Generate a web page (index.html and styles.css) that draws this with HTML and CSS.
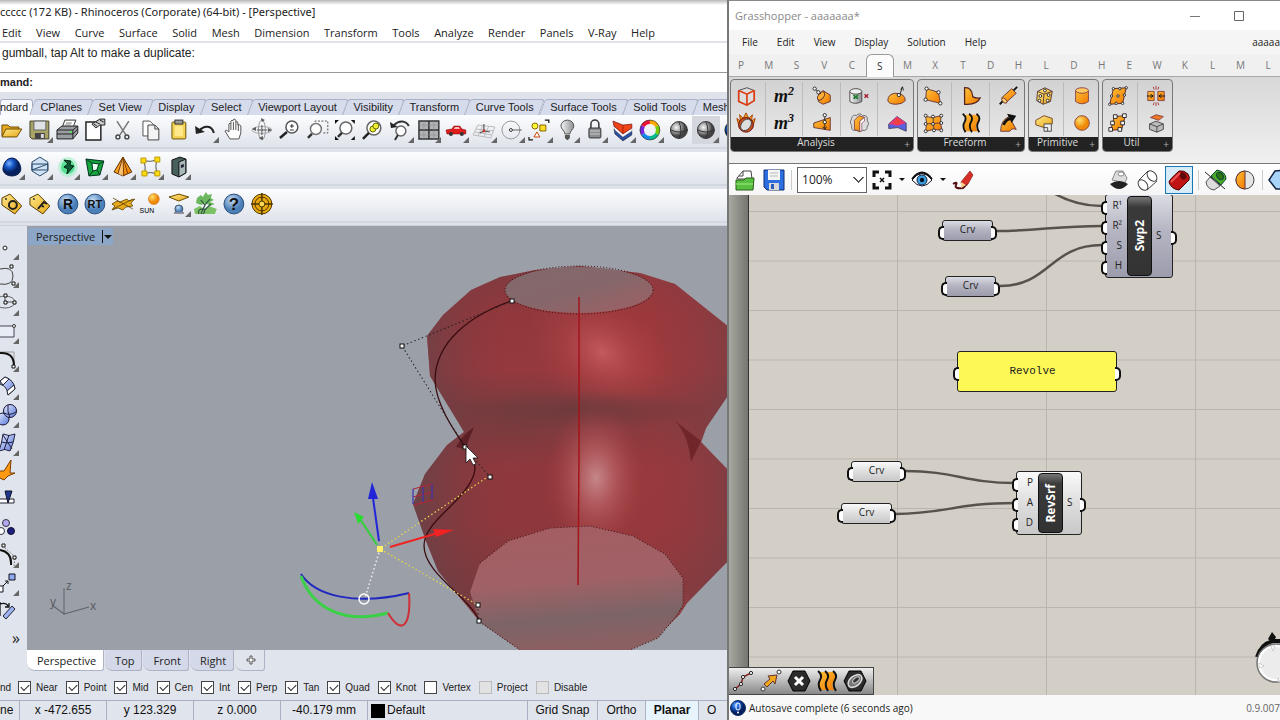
FILE: index.html
```
<!DOCTYPE html>
<html lang="en">
<head>
  <meta charset="UTF-8">
  <title>Rhinoceros + Grasshopper</title>
  <link rel="stylesheet" href="styles.css">
</head>
<body>

  <!-- shared gradients -->
  <svg class="defs" width="0" height="0">
    <defs>
      <linearGradient id="or" x1="0" y1="0" x2="1" y2="1"><stop offset="0" stop-color="#ffc23a"/><stop offset="1" stop-color="#f07800"/></linearGradient>
      <linearGradient id="ye" x1="0" y1="0" x2="1" y2="1"><stop offset="0" stop-color="#ffe88a"/><stop offset="1" stop-color="#e8a818"/></linearGradient>
      <radialGradient id="bl" cx=".35" cy=".3"><stop offset="0" stop-color="#7db4ff"/><stop offset=".5" stop-color="#1558c8"/><stop offset="1" stop-color="#06205e"/></radialGradient>
      <radialGradient id="lb" cx=".4" cy=".3"><stop offset="0" stop-color="#c4dcf4"/><stop offset="1" stop-color="#4a7fb8"/></radialGradient>
      <radialGradient id="gy" cx=".35" cy=".35"><stop offset="0" stop-color="#f4f4f4"/><stop offset=".6" stop-color="#9a9a9a"/><stop offset="1" stop-color="#444"/></radialGradient>
      <linearGradient id="cy" x1="0" y1="0" x2="1" y2="0"><stop offset="0" stop-color="#f4f4f4"/><stop offset="1" stop-color="#8c8f92"/></linearGradient>
      <radialGradient id="su" cx=".35" cy=".3"><stop offset="0" stop-color="#ffe070"/><stop offset="1" stop-color="#ee8a08"/></radialGradient>
      <linearGradient id="pu" x1="0" y1="0" x2="1" y2="1"><stop offset="0" stop-color="#e6ecff"/><stop offset="1" stop-color="#5a78d8"/></linearGradient>
    </defs>
  </svg>

  <section class="rhino">
    <header class="rhino-title">ccccc (172 KB) - Rhinoceros (Corporate) (64-bit) - [Perspective]</header>
    <nav class="rhino-menu">
      <button>Edit</button><button>View</button><button>Curve</button><button>Surface</button><button>Solid</button><button>Mesh</button><button>Dimension</button><button>Transform</button><button>Tools</button><button>Analyze</button><button>Render</button><button>Panels</button><button>V-Ray</button><button>Help</button>
    </nav>
    <div class="history">gumball, tap Alt to make a duplicate:</div>
    <div class="command"><label for="cmd">mand:</label><input id="cmd" type="text"></div>

    <nav class="tool-tabs">
      <button class="active">ndard</button><button>CPlanes</button><button>Set View</button><button>Display</button><button>Select</button><button>Viewport Layout</button><button>Visibility</button><button>Transform</button><button>Curve Tools</button><button>Surface Tools</button><button>Solid Tools</button><button>Mesh</button>
    </nav>

    <div class="toolbar">
      <button aria-label="Open"><svg viewBox="0 0 28 28"><path d="M4 20V9h6l2 2h9v3" fill="#e8a820" stroke="#6b4a00"/><path d="M4 21l4-8h16l-5 8z" fill="url(#ye)" stroke="#6b4a00"/></svg></button>
      <button class="more" aria-label="Save"><svg viewBox="0 0 28 28"><path d="M4 5h19v18H6l-2-2z" fill="#a8a468" stroke="#44432c"/><path d="M8 5h12v9H8z" fill="#dfe3e6" stroke="#666"/><path d="M9 17h10v6H9z" fill="#444"/><path d="M15 18h3v4h-3z" fill="#ddd"/></svg></button>
      <button aria-label="Print"><svg viewBox="0 0 28 28"><path d="M8 12l3-8h11l-3 8z" fill="#fff" stroke="#333"/><path d="M3 14l5-4h16v7l-5 6H3z" fill="#9a9ea2" stroke="#222"/><path d="M3 14h16l5-4M19 14v9M3 18h16l5-5" fill="none" stroke="#222"/><path d="M12 7h6M11 9h6" stroke="#777"/><circle cx="17" cy="16" r="1" fill="#4f4"/></svg></button>
      <button aria-label="Document properties"><svg viewBox="0 0 28 28"><path d="M5 6h15v18H5z" fill="#fff" stroke="#222" stroke-width="1.500"/><path d="M11 8l4 4 4-3 5 0V3l-5 0z" fill="#ccc" stroke="#222"/><path d="M13 8l3 2M15 6l4 2M19 4l4 2" stroke="#222"/></svg></button>
      <button aria-label="Cut"><svg viewBox="0 0 28 28"><path d="M8 5l9 14M20 5l-9 14" stroke="#777" stroke-width="1.500"/><circle cx="9" cy="21" r="2" fill="none" stroke="#444" stroke-width="1.400"/><circle cx="18" cy="21" r="2" fill="none" stroke="#444" stroke-width="1.400"/></svg></button>
      <button aria-label="Copy"><svg viewBox="0 0 28 28"><path d="M6 5h7l4 4v11H6z" fill="#fff" stroke="#555"/><path d="M11 9h7l4 4v11H11z" fill="#f4f4f4" stroke="#444"/><path d="M18 9v4h4" fill="none" stroke="#444"/></svg></button>
      <button aria-label="Paste"><svg viewBox="0 0 28 28"><rect x="7" y="6" width="14" height="17" rx="1" fill="#f4d458" stroke="#6b5200"/><rect x="10" y="4" width="8" height="4" fill="#999" stroke="#333"/><path d="M10 10h8v10h-8z" fill="#ffe98c"/></svg></button>
      <button class="more" aria-label="Undo"><svg viewBox="0 0 28 28"><path d="M7 15c5-6 13-6 15 2" fill="none" stroke="#222" stroke-width="2"/><path d="M3 10l1 8 9-2z" fill="#222"/></svg></button>
      <button aria-label="Pan"><svg viewBox="0 0 28 28"><path d="M10 23L5 15q1-2 4 1V8q1-2 2 0v-3q1-2 2 0V4q1-2 3 0v2q2-1 2 1v2q2-1 3 1v7l-2 6zM11 8v6M13.500 6v8M16 6v8M18.500 8v7" fill="#fff" stroke="#555"/></svg></button>
      <button aria-label="Rotate view"><svg viewBox="0 0 28 28"><ellipse cx="14" cy="14" rx="10" ry="3.500" fill="none" stroke="#aaa"/><ellipse cx="14" cy="14" rx="3.500" ry="10" fill="none" stroke="#999"/><path d="M14 9v10M9 14h10" stroke="#555"/><path d="M13 2l4 2-3 2zM20 12l4 2-4 2zM11 22l4-2v4zM4 13l4-2v4z" fill="#555"/></svg></button>
      <button aria-label="Zoom dynamic"><svg viewBox="0 0 28 28"><circle cx="16" cy="11" r="6" fill="#fff" stroke="#555" stroke-width="1.500"/><path d="M16 8v4M14 10h4M14 14h4" stroke="#333"/><path d="M11 16l-7 6" stroke="#222" stroke-width="2.500"/></svg></button>
      <button aria-label="Zoom window"><svg viewBox="0 0 28 28"><path d="M11 9V5h13v12h-5" fill="none" stroke="#555" stroke-dasharray="2 1.500"/><circle cx="12" cy="13" r="5.500" fill="#fff" stroke="#777" stroke-width="1.500"/><path d="M8 18l-4 4" stroke="#333" stroke-width="2.500"/></svg></button>
      <button aria-label="Zoom extents"><svg viewBox="0 0 28 28"><circle cx="15" cy="12" r="6" fill="#fff" stroke="#666" stroke-width="1.500"/><path d="M11 17l-4 4" stroke="#333" stroke-width="2.500"/><path d="M4 8V4h4zM24 8V4h-4zM4 20v4h4zM24 20v4h-4z" fill="#111"/></svg></button>
      <button aria-label="Zoom selected"><svg viewBox="0 0 28 28"><circle cx="15" cy="12" r="7" fill="#fff" stroke="#666" stroke-width="1.500"/><circle cx="14" cy="13" r="3" fill="#ee3" stroke="#660"/><circle cx="17" cy="10" r="3" fill="#ee3" stroke="#660"/><path d="M10 17l-6 6" stroke="#222" stroke-width="2.500"/></svg></button>
      <button class="more" aria-label="Undo view"><svg viewBox="0 0 28 28"><circle cx="14" cy="15" r="5" fill="#fff" stroke="#666" stroke-width="1.500"/><path d="M11 19l-3 5" stroke="#333" stroke-width="2"/><path d="M7 9c5-5 12-5 15 1" fill="none" stroke="#333" stroke-width="2"/><path d="M3 6l1 6 7-1z" fill="#222"/></svg></button>
      <button class="more" aria-label="4 viewports"><svg viewBox="0 0 28 28"><path d="M4 5h20v18H4zM14 5v18M4 14h20" fill="#b0b3b6" stroke="#333" stroke-width="1.500"/><path d="M9 5v18M19 5v18M4 9h20M4 19h20" stroke="#888" stroke-width=".5"/></svg></button>
      <button class="more" aria-label="Named view"><svg viewBox="0 0 28 28"><path d="M4 14l6-1 2-3h6l2 3 4 1v4H5z" fill="#e01c1c" stroke="#700" stroke-width=".5"/><path d="M12 13l1-2h4l1 2z" fill="#fbb"/><circle cx="9" cy="18" r="2" fill="#333"/><circle cx="20" cy="18" r="2" fill="#333"/></svg></button>
      <button class="more" aria-label="Set CPlane"><svg viewBox="0 0 28 28"><path d="M8 9l17 2-4 11-18-3zM6 13l18 2M5 16l17 3M13 9l-5 11M19 10l-5 11" fill="none" stroke="#bbb"/><path d="M14 15V8M14 15l6 1M14 15l-4 2" stroke="#555" stroke-width="1.200"/><circle cx="14" cy="15" r="1.500" fill="#c33"/></svg></button>
      <button class="more" aria-label="Set view"><svg viewBox="0 0 28 28"><circle cx="13" cy="14" r="9" fill="none" stroke="#999"/><path d="M14 14h10" stroke="#666"/><circle cx="13" cy="14" r="1.500" fill="#fff" stroke="#333"/></svg></button>
      <button class="more" aria-label="Object snap"><svg viewBox="0 0 28 28"><circle cx="9" cy="10" r="3" fill="#ff3" stroke="#886600"/><path d="M14 9h6v6h-6z" fill="#fd2" stroke="#860"/><path d="M11 16l3 5H8z" fill="#fff" stroke="#c40"/><path d="M19 4h4v3M3 21v3h4" fill="none" stroke="#111" stroke-width="1.200"/></svg></button>
      <button class="more" aria-label="Hide"><svg viewBox="0 0 28 28"><path d="M11 18c0-3-4-5-4-8a6.500 6 0 0113 0c0 3-4 5-4 8z" fill="url(#cy)" stroke="#555"/><path d="M11 19h5v3l-2 2h-1l-2-2z" fill="#555"/></svg></button>
      <button class="more" aria-label="Lock"><svg viewBox="0 0 28 28"><path d="M10 12V8a4 4 0 018 0v4" fill="none" stroke="#333" stroke-width="1.500"/><rect x="8" y="12" width="12" height="10" rx="1" fill="#8b8d90" stroke="#333"/><path d="M9 15h10M9 18h10" stroke="#ccc"/></svg></button>
      <button class="more" aria-label="Layers"><svg viewBox="0 0 28 28"><path d="M5 13l9 8 9-6v4l-9 6-8-7z" fill="#2a4fa0" stroke="#112" stroke-width=".5"/><path d="M5 10l9 8 9-6v3l-9 6-8-7z" fill="#fff" stroke="#889" stroke-width=".5"/><path d="M4 5l10 4 9-1v4l-9 6-9-8z" fill="#ee4418" stroke="#711" stroke-width=".7"/><path d="M14 9v8" stroke="#a20"/></svg></button>
      <button class="more" aria-label="Properties"><svg viewBox="0 0 28 28"><g fill="none" stroke-width="4"><path d="M13 6a8 8 0 017 4" stroke="#fa0"/><path d="M20 10a8 8 0 010 8" stroke="#7c0"/><path d="M20 18a8 8 0 01-7 4" stroke="#0b8"/><path d="M13 22a8 8 0 01-7-4" stroke="#18e"/><path d="M6 18a8 8 0 010-8" stroke="#72d"/><path d="M6 10a8 8 0 017-4" stroke="#e13"/></g><circle cx="13" cy="14" r="10" fill="none" stroke="#333" stroke-width=".7"/></svg></button>
      <button aria-label="Shade"><svg viewBox="0 0 28 28"><circle cx="14" cy="14" r="8.500" fill="url(#gy)" stroke="#333"/><path d="M6 14q8 4 17 0M14 6q4 8 0 17" fill="none" stroke="#333"/></svg></button>
      <button class="more pressed" aria-label="Render"><svg viewBox="0 0 28 28"><circle cx="14" cy="14" r="8.500" fill="url(#gy)" stroke="#333"/><path d="M6 14q8 4 17 0M14 6q4 8 0 17" fill="none" stroke="#333"/></svg></button>
      <button aria-label="Render preview"><svg viewBox="0 0 28 28"><circle cx="14" cy="14" r="9" fill="url(#bl)" stroke="#123"/></svg></button>
    </div>

    <div class="toolbar">
      <button class="more" aria-label="Sphere"><svg viewBox="0 0 28 28"><path d="M14 5c6 0 9 7 9 11s-4 7-9 7-9-3-9-7 3-11 9-11z" fill="url(#bl)" stroke="#041a4c"/></svg></button>
      <button class="more" aria-label="Wire box"><svg viewBox="0 0 28 28"><path d="M14 4l8 5v9l-8 5-8-5V9z" fill="#cfe3f5" stroke="#2b4a6a"/><path d="M6 11h16v6H6zM6 17l16-6" fill="none" stroke="#2b4a6a"/></svg></button>
      <button class="more" aria-label="Glow"><svg viewBox="0 0 28 28"><circle cx="14" cy="14" r="10" fill="#8ff0bc" opacity=".5"/><circle cx="14" cy="14" r="7" fill="#3ddc84" opacity=".8"/><path d="M10 7l7 1-1 4 4 1-7 8 1-5-4-2 4-3z" fill="#0d5a32" stroke="#021"/></svg></button>
      <button class="more" aria-label="Mesh plane"><svg viewBox="0 0 28 28"><path d="M5 6l18 2-4 14-11 1z" fill="#16a43c" stroke="#032"/><path d="M11 10l7 1-2 6-4 1z" fill="#e9fff0" stroke="#032"/><path d="M5 6l6 4M23 8l-5 3M8 23l4-5M19 22l-3-5" stroke="#032"/></svg></button>
      <button class="more" aria-label="Cone"><svg viewBox="0 0 28 28"><path d="M14 4l9 15-9 4-9-4z" fill="url(#or)" stroke="#5a2c00"/><path d="M14 4v19l-5-2z" fill="#fff" opacity=".4"/><path d="M14 4l1 19M14 4l-5 17M14 4l5 17" stroke="#7a3c00" fill="none"/></svg></button>
      <button class="more" aria-label="Control polygon"><svg viewBox="0 0 28 28"><path d="M6 7q8 3 15-1-4 7 0 15-8-3-14 0 3-7-1-14z" fill="none" stroke="#555"/><path d="M4 5h5v5H4zM18 4h5v5h-5zM18 18h5v5h-5zM5 18h5v5H5z" fill="#fd1" stroke="#b90"/></svg></button>
      <button class="more" aria-label="Book"><svg viewBox="0 0 28 28"><path d="M7 7l8-3 6 2v14l-7 4-7-3z" fill="#47605e" stroke="#111"/><path d="M14 9l7-3v14l-7 4z" fill="#a9b9b8" stroke="#111"/><path d="M16 12l3-1v3l-3 1z" fill="#223"/></svg></button>
    </div>

    <div class="toolbar last">
      <button aria-label="V-Ray options"><svg viewBox="0 0 28 28"><path d="M4 8l8-4 12 12-7 8L4 15z" fill="url(#ye)" stroke="#553c00"/><circle cx="15" cy="15" r="4" fill="none" stroke="#222" stroke-width="2"/><circle cx="8" cy="9" r="1" fill="#333"/></svg></button>
      <button aria-label="V-Ray frame buffer"><svg viewBox="0 0 28 28"><path d="M4 8l8-4 12 12-7 8L4 15z" fill="url(#ye)" stroke="#553c00"/><path d="M12 19l6-7 3 2M15 15l3 2" fill="none" stroke="#222" stroke-width="2"/><circle cx="8" cy="9" r="1" fill="#333"/></svg></button>
      <button aria-label="V-Ray render"><svg viewBox="0 0 28 28"><circle cx="14" cy="14" r="10" fill="url(#lb)" stroke="#2c4f7c"/><text x="14" y="19" class="ico-text">R</text></svg></button>
      <button aria-label="V-Ray RT"><svg viewBox="0 0 28 28"><circle cx="14" cy="14" r="10" fill="url(#lb)" stroke="#2c4f7c"/><text x="14" y="18" class="ico-text small">RT</text></svg></button>
      <button aria-label="Infinite plane"><svg viewBox="0 0 28 28"><path d="M3 14l5-3 3 1 7-3 2 2 6-2-4 4 2 3-7 1-3 3-5-2-6 2 3-4z" fill="#e8aa1c" stroke="#5c4000" stroke-width=".8"/><path d="M4 8l20 11M4 19L24 9" stroke="#5c4000" stroke-width=".8"/></svg></button>
      <button aria-label="Sun"><svg viewBox="0 0 28 28"><circle cx="17" cy="9" r="5.500" fill="url(#su)" stroke="#c60" stroke-width=".5"/><text x="10" y="23" class="sun-text">SUN</text></svg></button>
      <button class="more" aria-label="Lights"><svg viewBox="0 0 28 28"><path d="M4 7l10-3 10 3-10 4z" fill="url(#ye)" stroke="#6b4a00"/><circle cx="14" cy="19" r="4" fill="url(#lb)" stroke="#456"/><path d="M9 23h10" stroke="#889" stroke-width="2"/></svg></button>
      <button aria-label="Proxy tree"><svg viewBox="0 0 28 28"><path d="M5 8l4-3 2 2 3-5 2 3 4-1-1 4 3 2-4 2 5 2-5 2-4-3-5 2-5-2z" fill="#6cb85e"/><path d="M2 19l6-3 4 3 5-3 8 3-2 5H3z" fill="#7cc264"/><path d="M9 24l4-9-4-5M13 15l5-6M13 20l6-6M7 24q-2-5 5-5 2 2-1 5" fill="none" stroke="#354" stroke-width="1.200"/></svg></button>
      <button aria-label="Help"><svg viewBox="0 0 28 28"><circle cx="14" cy="14" r="10" fill="url(#lb)" stroke="#2c4f7c"/><text x="14" y="20" class="ico-text big">?</text></svg></button>
      <button aria-label="Target"><svg viewBox="0 0 28 28"><circle cx="14" cy="14" r="10" fill="#e8aa10" stroke="#4c3400"/><circle cx="14" cy="14" r="7" fill="none" stroke="#4c3400"/><circle cx="14" cy="14" r="3" fill="#ffda50" stroke="#4c3400"/><path d="M14 3v8M14 17v8M3 14h8M17 14h8" stroke="#4c3400" stroke-width="1.500"/></svg></button>
    </div>

    <main class="work">
      <aside class="side">
        <button class="more" aria-label="Point"><svg viewBox="0 0 20 28"><circle cx="5" cy="15" r="2" fill="#fff" stroke="#222"/></svg></button>
        <button class="more" aria-label="Curve"><svg viewBox="0 0 20 28"><path d="M0 8q13-3 13 7t-13 8" fill="none" stroke="#444"/><path d="M10 4h3v3h-3zM12 21h3v3h-3z" fill="#fff" stroke="#111"/></svg></button>
        <button class="more" aria-label="Ellipse"><svg viewBox="0 0 20 28"><ellipse cx="5" cy="13" rx="10" ry="6" fill="none" stroke="#666"/><path d="M5 13h9M5 13V7" stroke="#555"/><path d="M4 5h3v3H4zM4 12h3v3H4zM13 12h3v3h-3z" fill="#fff" stroke="#111"/></svg></button>
        <button class="more" aria-label="Rectangle"><svg viewBox="0 0 20 28"><path d="M-3 9h17v11H-3z" fill="#e8ecf4" stroke="#445"/><circle cx="14" cy="9" r="1.500" fill="#fff" stroke="#333"/></svg></button>
        <button class="more" aria-label="Fillet"><svg viewBox="0 0 20 28"><path d="M0 7h14v14" fill="none" stroke="#999"/><path d="M0 8q14-1 14 13" fill="none" stroke="#111" stroke-width="2"/><path d="M12 20h3v3h-3z" fill="#fff" stroke="#111"/></svg></button>
        <button class="more" aria-label="Surface"><svg viewBox="0 0 20 28"><path d="M0 8l5-4q9 3 10 12l-7 6q0-8-8-11z" fill="url(#pu)" stroke="#223"/><path d="M0 8l5-4 4 2-6 6zM8 22l7-6-1-4-7 6z" fill="#fff" stroke="#223"/></svg></button>
        <button class="more" aria-label="Solid"><svg viewBox="0 0 20 28"><circle cx="3" cy="18" r="6" fill="url(#pu)" stroke="#113"/><circle cx="10" cy="10" r="6.500" fill="url(#pu)" stroke="#113"/><path d="M4 12q6 3 12-1M8 4q-1 6 2 13" stroke="#224" fill="none"/></svg></button>
        <button class="more" aria-label="Mesh"><svg viewBox="0 0 20 28"><path d="M3 5q6 3 12 0-1 8-5 17-5-3-11 0Q2 14 3 5z" fill="url(#pu)" stroke="#224"/><path d="M1 13q6 2 12 0M9 6L4 21M3 6l9 14" fill="none" stroke="#224"/></svg></button>
        <button aria-label="Explode"><svg viewBox="0 0 20 28"><path d="M-2 14l6 0 7-11-1 13 5 0-7 3-4 4-6-3z" fill="#ff9a10" stroke="#7a3c00"/></svg></button>
        <button aria-label="Trim"><svg viewBox="0 0 20 28"><path d="M-2 14h16v4H-2z" fill="#fff" stroke="#223"/><path d="M5 6h7L8 18z" fill="#1d3a90" stroke="#112"/></svg></button>
        <button aria-label="Group"><svg viewBox="0 0 20 28"><circle cx="6" cy="10" r="3.500" fill="#b4a8f0" stroke="#334"/><circle cx="1" cy="18" r="3.500" fill="#fff" stroke="#334"/><circle cx="11" cy="18" r="3.500" fill="#20207c" stroke="#113"/></svg></button>
        <button class="more" aria-label="Edit points"><svg viewBox="0 0 20 28"><path d="M0 9q12 2 11 15" fill="none" stroke="#111" stroke-width="2"/><path d="M3 5l12 11-1 10" fill="none" stroke="#333" stroke-dasharray="1 2"/><path d="M2 3h3v3H2zM13 15h3v3h-3z" fill="#fff" stroke="#111"/></svg></button>
        <button class="more" aria-label="Scale"><svg viewBox="0 0 20 28"><path d="M9 5h6v6H9z" fill="#8fa8ee" stroke="#112"/><path d="M-3 17h6v6h-6z" fill="#fff" stroke="#112"/><path d="M3 17l5-5M5 12h3v3" fill="none" stroke="#111"/></svg></button>
        <button aria-label="Orient"><svg viewBox="0 0 20 28"><path d="M0 5v14M0 7q6-2 8 2M5 10l4 0 0-4" fill="none" stroke="#111" stroke-width="1.300"/><path d="M3 19L12 9l3 3L6 22z" fill="#9db2f2" stroke="#223"/></svg></button>
        <button class="chevrons">»</button>
      </aside>

      <div class="viewport">
        <button class="view-name">Perspective</button>
        <svg class="scene" viewBox="27 226 700 424" preserveAspectRatio="xMinYMin slice">
          <defs>
            <linearGradient id="body" x1="0" y1="267" x2="0" y2="650" gradientUnits="userSpaceOnUse">
              <stop offset="0" stop-color="#7c3c41"/><stop offset=".12" stop-color="#92383c"/><stop offset=".27" stop-color="#963a3e"/><stop offset=".37" stop-color="#763c3f"/><stop offset=".42" stop-color="#783c3f"/><stop offset=".52" stop-color="#8e393d"/><stop offset=".68" stop-color="#8e383c"/><stop offset=".85" stop-color="#743b3f"/><stop offset="1" stop-color="#a4585d"/>
            </linearGradient>
            <linearGradient id="edge" x1="413" y1="0" x2="727" y2="0" gradientUnits="userSpaceOnUse">
              <stop offset="0" stop-color="#63444a" stop-opacity=".85"/><stop offset=".3" stop-color="#8a353a" stop-opacity=".1"/><stop offset=".75" stop-color="#a8383c" stop-opacity=".4"/><stop offset="1" stop-color="#7d3f44" stop-opacity=".7"/>
            </linearGradient>
            <radialGradient id="shine"><stop offset="0" stop-color="#cc6266" stop-opacity=".8"/><stop offset=".5" stop-color="#b8484c" stop-opacity=".4"/><stop offset="1" stop-color="#a83c40" stop-opacity="0"/></radialGradient>
            <radialGradient id="shine2"><stop offset="0" stop-color="#c88c8e" stop-opacity=".95"/><stop offset=".4" stop-color="#bc6467" stop-opacity=".65"/><stop offset="1" stop-color="#a83c40" stop-opacity="0"/></radialGradient>
            <radialGradient id="fold"><stop offset="0" stop-color="#6b3b3d" stop-opacity=".8"/><stop offset="1" stop-color="#6b3b3d" stop-opacity="0"/></radialGradient>
            <linearGradient id="cap1" x1="0" y1="0" x2="1" y2="1"><stop offset="0" stop-color="#82696c"/><stop offset=".5" stop-color="#85676a"/><stop offset="1" stop-color="#a06065"/></linearGradient>
            <linearGradient id="cap2" x1="0" y1="0" x2=".15" y2="1"><stop offset="0" stop-color="#a35d62"/><stop offset=".5" stop-color="#a06166"/><stop offset=".8" stop-color="#7c6466"/><stop offset="1" stop-color="#8a6063"/></linearGradient>
            <path id="solid" d="M427 336l16-21 28-25 29-13 35-7 45-4 60 7 35 11 54 43v67l-23 34-5 14 28 29v89l-42 43-7 11-24 24-28 12H520l-20-14-20-14-42-51-12-30-13-37 12-30 22-29 17-13-6-10-28-46z"/>
          </defs>
          <use href="#solid" fill="url(#body)"/>
          <use href="#solid" fill="url(#edge)"/>
          <ellipse cx="602" cy="352" rx="80" ry="60" fill="url(#shine)" transform="rotate(35 602 352)"/>
          <ellipse cx="580" cy="410" rx="130" ry="20" fill="url(#fold)"/>
          <ellipse cx="596" cy="478" rx="50" ry="76" fill="url(#shine2)"/>
          <path d="M456 447q6-12 18-20l-9 22z" fill="#551a1e" opacity=".8"/>
          <path d="M675 421l26 20-10 21q-3-28-16-41z" fill="#6a2024" opacity=".8"/>
          <!-- end caps -->
          <ellipse cx="579" cy="290" rx="74" ry="23" fill="url(#cap1)"/>
          <path d="M470 592l10-29 28-22 42-13 40-2 43 10 32 18 18 24v27l-6 10-19 23-28 12H520l-40-28z" fill="url(#cap2)"/>
          <g fill="none" stroke="#401416" stroke-dasharray="1 2">
            <ellipse cx="579" cy="290" rx="74" ry="24"/>
            <path d="M480 563l28-22 42-13 40-2 43 10 32 18 18 24v27l-6 10-19 23-28 12M480 622l40 28"/>
          </g>
          <path d="M579 297v150l-1 138" stroke="#a3141c" stroke-width="1.500" fill="none"/>
          <!-- profile curve and its control points -->
          <path d="M511 301c-40 14-75 40-76 78 0 25 20 53 31 69 10 14 13 22 2 38-16 24-44 38-44 60 0 27 44 50 55 74" fill="none" stroke="#3a0c10" stroke-width="1.300"/>
          <path d="M512 301L402 346l63 101 24 29M478 605v15" fill="none" stroke="#222" stroke-dasharray="1.500 2.500"/>
          <path d="M489 476l-109 73 98 56" fill="none" stroke="#e6d44c" stroke-width="1.300" stroke-dasharray="1.500 2.500"/>
          <path d="M380 549l-15 49" fill="none" stroke="#eee" stroke-width="1.500" stroke-dasharray="1.500 2.500"/>
          <g fill="#fff" stroke="#111"><path d="M510 299h4v4h-4zM400 344h4v4h-4zM463 445h4v4h-4zM488 475h4v4h-4zM476 603h4v4h-4zM477 619h4v4h-4z"/></g>
          <!-- gumball -->
          <path d="M413 489l20-5M414 505l19-5M413 497l20-5" fill="none" stroke="#b02838" stroke-width="1.200"/>
          <path d="M413 489v15M423 487v15M432 484v15" stroke="#3a34b0" stroke-width="1.200"/>
          <g fill="none" stroke-width="2">
            <path d="M379 541l-6-43" stroke="#2224d8"/><path d="M377 545l-17-26" stroke="#30d038"/><path d="M390 547l48-14" stroke="#ee2424"/>
            <path d="M301 574c14 22 55 32 108 19" stroke="#2028c0"/><path d="M301 576c12 34 45 48 87 37" stroke="#3cd048" stroke-width="3"/><path d="M409 593c2 30-6 45-21 20" stroke="#d03038"/>
            <circle cx="364" cy="599" r="5" stroke="#fff" stroke-width="1.500"/>
          </g>
          <path d="M372 482l6 17h-10z" fill="#2224d8"/><path d="M354 512l10 5-6 7z" fill="#28dc30"/><path d="M454 530l-18 7-3-8z" fill="#f02222"/>
          <path d="M377 546h6v6h-6z" fill="#fff06a"/>
          <path d="M466 446v17l4-4 3 6 3-1-3-6h5z" fill="#fff" stroke="#111" stroke-width=".8"/>
          <!-- world axes -->
          <path d="M64 588v26l25-7M64 614l-12-9" fill="none" stroke="#60646a"/>
          <text x="66" y="590">z</text><text x="90" y="610">x</text><text x="50" y="606">y</text>
        </svg>
      </div>
    </main>

    <nav class="view-tabs">
      <button class="active">Perspective</button><button>Top</button><button>Front</button><button>Right</button>
      <button class="add" aria-label="New viewport"><svg width="10" height="10" viewBox="0 0 10 10"><path d="M4 1h2v3h3v2H6v3H4V6H1V4h3z" fill="#fff" stroke="#555"/></svg></button>
    </nav>

    <div class="osnap">
      <span>nd</span>
      <label><input type="checkbox" checked>Near</label>
      <label><input type="checkbox" checked>Point</label>
      <label><input type="checkbox" checked>Mid</label>
      <label><input type="checkbox" checked>Cen</label>
      <label><input type="checkbox" checked>Int</label>
      <label><input type="checkbox" checked>Perp</label>
      <label><input type="checkbox" checked>Tan</label>
      <label><input type="checkbox" checked>Quad</label>
      <label><input type="checkbox" checked>Knot</label>
      <label><input type="checkbox">Vertex</label>
      <label><input type="checkbox" disabled>Project</label>
      <label><input type="checkbox" disabled>Disable</label>
    </div>

    <footer class="rhino-status">
      <span class="plane">ne</span><span class="coord">x -472.655</span><span class="coord">y 123.329</span><span class="coord">z 0.000</span><span class="coord">-40.179 mm</span>
      <span class="layer"><i class="swatch"></i>Default</span>
      <button class="snap">Grid Snap</button><button class="ortho">Ortho</button><button class="planar">Planar</button><button>O</button>
    </footer>
  </section>

  <section class="gh">
    <header class="gh-title">
      <span>Grasshopper - aaaaaaa*</span>
      <button aria-label="Minimize"><svg width="12" height="12" viewBox="0 0 12 12"><path d="M1 6.500h10" stroke="#777"/></svg></button>
      <button aria-label="Maximize"><svg width="12" height="12" viewBox="0 0 12 12"><path d="M1.500 1.500h9v9h-9z" fill="none" stroke="#666"/></svg></button>
    </header>
    <nav class="gh-menu">
      <button>File</button><button>Edit</button><button>View</button><button>Display</button><button>Solution</button><button>Help</button>
      <span class="doc">aaaaa</span>
    </nav>
    <nav class="gh-tabs">
      <button>P</button><button>M</button><button>S</button><button>V</button><button>C</button><button class="active">S</button><button>M</button><button>X</button><button>T</button><button>D</button><button>H</button><button>L</button><button>D</button><button>H</button><button>E</button><button>W</button><button>K</button><button>L</button><button>M</button><button>L</button>
    </nav>

    <div class="ribbon">
      <div class="panel analysis">
        <div class="icons">
          <button aria-label="Deconstruct Brep"><svg viewBox="0 0 24 24"><path d="M4 6l9-3 8 3v11l-8 5-9-4z" fill="#ddd" stroke="#444"/><path d="M4 6l9 4 8-4M13 10v12M4 6v12l9 4 8-5V6" fill="none" stroke="#e03c10" stroke-width="1.800"/></svg></button>
          <button aria-label="Area"><i class="m">m<sup>2</sup></i></button>
          <button aria-label="Surface closest point"><svg viewBox="0 0 24 24"><path d="M8 12l5-6 8 5v7l-8 3-5-3z" fill="url(#or)" stroke="#633"/><ellipse cx="11" cy="12" rx="3" ry="5" transform="rotate(35 11 12)" fill="#ffb030" stroke="#633"/><path d="M4 4l7 6" stroke="#222"/><circle cx="4" cy="4" r="1.800" fill="#fff" stroke="#222"/><circle cx="8" cy="8" r="1.800" fill="#fff" stroke="#222"/></svg></button>
          <button aria-label="Point in Brep"><svg viewBox="0 0 24 24"><path d="M2 7v11q6 4 13 0V7" fill="url(#cy)" stroke="#444"/><ellipse cx="8.500" cy="7" rx="6.500" ry="3" fill="#eee" stroke="#444"/><path d="M6 11l5 4M11 11l-5 4" stroke="#1c7c30" stroke-width="1.800"/><path d="M18 10l4 4M22 10l-4 4" stroke="#a02030" stroke-width="1.500"/></svg></button>
          <button aria-label="Evaluate surface"><svg viewBox="0 0 24 24"><path d="M2 17q0-7 8-8 11 0 11 8-3 4-10 4-8 0-9-4z" fill="url(#or)" stroke="#633"/><path d="M15 11l3-9M16 5l2-3 1 4" stroke="#222" fill="none"/><circle cx="14" cy="11" r="1.800" fill="#fff" stroke="#222"/></svg></button>
          <button aria-label="Brep wireframe"><svg viewBox="0 0 24 24"><path d="M2 7l4 3-1-7 4 4 3-6 3 6 4-4-1 7 4-3-3 11H5z" fill="#f6a020" stroke="#a03c00"/><circle cx="12" cy="14" r="8" fill="#c85020" stroke="#611"/><ellipse cx="12" cy="14" rx="5" ry="7" transform="rotate(40 12 14)" fill="#ddd" stroke="#444"/></svg></button>
          <button aria-label="Volume"><i class="m">m<sup>3</sup></i></button>
          <button aria-label="Curvature"><svg viewBox="0 0 24 24"><path d="M3 12l18-6v14L3 17z" fill="url(#or)" stroke="#633"/><path d="M15 4v14M13 16l2 3 2-3" stroke="#222" fill="none"/><circle cx="15" cy="3.500" r="1.800" fill="#fff" stroke="#222"/><circle cx="15" cy="11" r="1.800" fill="#fff" stroke="#222"/></svg></button>
          <button aria-label="Shape in Brep"><svg viewBox="0 0 24 24"><path d="M4 7q1-5 5-3 4-4 7 0 6-1 5 5 3 4 0 7 0 5-5 4-4 3-7 0-6 1-5-5-3-4 0-8z" fill="#ddd" stroke="#666"/><path d="M7 9l5-5 6 2-5 4v11l-6-2z" fill="url(#or)" stroke="#844"/><path d="M13 10l5-4v4l-3 2v9l-2 0z" fill="#fff" stroke="#844" stroke-width=".7"/></svg></button>
          <button aria-label="Principal curvature"><svg viewBox="0 0 24 24"><path d="M3 13l9-8 10 7v9l-9-4-10 1z" fill="#5a62e0" stroke="#446"/><path d="M3 13l9-8 10 7-9 3z" fill="#e83878"/><path d="M8 12l4-6 5 5-4 3z" fill="#f04040"/></svg></button>
        </div>
        <div class="caption">Analysis<span>+</span></div>
      </div>
      <div class="panel freeform">
        <div class="icons">
          <button aria-label="4 point surface"><svg viewBox="0 0 24 24"><path d="M5 4l13 4 2 12L4 16z" fill="url(#or)" stroke="#633"/><g fill="#fff" stroke="#222"><circle cx="5" cy="4" r="1.800"/><circle cx="18" cy="8" r="1.800"/><circle cx="20" cy="20" r="1.800"/><circle cx="4" cy="16" r="1.800"/></g></svg></button>
          <button aria-label="Boundary surfaces"><svg viewBox="0 0 24 24"><path d="M5 3q8-1 9 10 4 2 8 1-3 8-17 7z" fill="url(#or)" stroke="#522" stroke-width="1.400"/></svg></button>
          <button aria-label="Pipe"><svg viewBox="0 0 24 24"><path d="M3 21l19-19" stroke="#111" stroke-width="2"/><path d="M5 14L16 4l5 5L10 19z" fill="url(#or)" stroke="#633"/><ellipse cx="8" cy="17" rx="2" ry="3.500" transform="rotate(-45 8 17)" fill="#ffcf70" stroke="#633"/></svg></button>
          <button aria-label="Surface from points"><svg viewBox="0 0 24 24"><path d="M4 5l8 1 9-2-1 8 2 8-9-1-9 2 1-9z" fill="url(#or)" stroke="#633"/><path d="M5 13l15-1M12 5l1 15" stroke="#633"/><g fill="#fff" stroke="#222"><circle cx="4" cy="4" r="1.600"/><circle cx="12" cy="5" r="1.600"/><circle cx="21" cy="4" r="1.600"/><circle cx="4" cy="13" r="1.600"/><circle cx="12" cy="13" r="1.600"/><circle cx="21" cy="12" r="1.600"/><circle cx="4" cy="21" r="1.600"/><circle cx="13" cy="20" r="1.600"/><circle cx="21" cy="20" r="1.600"/></g></svg></button>
          <button aria-label="Loft"><svg viewBox="0 0 24 24"><path d="M4 3q5 4 1 9t1 9h14q-5-4-1-9t-1-9z" fill="url(#or)"/><path d="M3 2q5 4 2 9t1 11M10 2q5 4 2 9t1 11M18 2q5 4 2 9t1 11" fill="none" stroke="#111" stroke-width="2"/></svg></button>
          <button aria-label="Sweep"><svg viewBox="0 0 24 24"><path d="M4 21q0-12 9-16l8 14q-5-2-7 2z" fill="url(#or)" stroke="#633"/><path d="M7 14q3-6 8-7" fill="none" stroke="#111" stroke-width="3"/><path d="M11 2l10 2-5 8z" fill="#111"/></svg></button>
        </div>
        <div class="caption">Freeform<span>+</span></div>
      </div>
      <div class="panel">
        <div class="icons">
          <button aria-label="Bounding box"><svg viewBox="0 0 24 24"><path d="M5 7l8-4 8 4-2 11-8 3-7-4z" fill="url(#ye)" stroke="#533"/><path d="M5 7l7 3 9-3M12 10l-1 11" fill="none" stroke="#533"/><g fill="#fff" stroke="#222"><circle cx="13" cy="6" r="1.500"/><circle cx="8" cy="12" r="1.500"/><circle cx="17" cy="11" r="1.500"/><circle cx="7" cy="17" r="1.500"/><circle cx="16" cy="17" r="1.500"/></g></svg></button>
          <button aria-label="Cylinder"><svg viewBox="0 0 24 24"><path d="M5 6v12q7 5 14 0V6" fill="url(#or)" stroke="#844"/><ellipse cx="12" cy="6" rx="7" ry="3" fill="#ffc860" stroke="#844"/></svg></button>
          <button aria-label="Box"><svg viewBox="0 0 24 24"><path d="M3 9l9-5 9 3v6l-9 4-9-3z" fill="url(#ye)" stroke="#742"/><path d="M12 13h8v8h-8z" fill="#eee" stroke="#444"/><path d="M12 17h4v4" fill="none" stroke="#444"/></svg></button>
          <button aria-label="Sphere"><svg viewBox="0 0 24 24"><circle cx="12" cy="12" r="8" fill="url(#su)" stroke="#844"/></svg></button>
        </div>
        <div class="caption">Primitive<span>+</span></div>
      </div>
      <div class="panel">
        <div class="icons">
          <button aria-label="Divide surface"><svg viewBox="0 0 24 24"><path d="M7 4l14-1-4 17-14 1z" fill="url(#or)" stroke="#522"/><g fill="#fff" stroke="#222"><circle cx="7" cy="4" r="1.300"/><circle cx="14" cy="4" r="1.300"/><circle cx="21" cy="3" r="1.300"/><circle cx="5" cy="12" r="1.300"/><circle cx="12" cy="12" r="1.300"/><circle cx="19" cy="11" r="1.300"/><circle cx="3" cy="21" r="1.300"/><circle cx="10" cy="20" r="1.300"/><circle cx="17" cy="20" r="1.300"/></g></svg></button>
          <button aria-label="Brep join"><svg viewBox="0 0 24 24"><path d="M3 7h7v10H3zM14 7h7v10h-7z" fill="url(#or)" stroke="#844"/><path d="M2 12h6M6 10l3 2-3 2M22 12h-6M18 10l-3 2 3 2" stroke="#111" fill="none"/><path d="M12 1v4M12 19v4M9 2l1 3M15 2l-1 3M9 22l1-3M15 22l-1-3" stroke="#a33"/></svg></button>
          <button aria-label="Surface frames"><svg viewBox="0 0 24 24"><path d="M8 5l12-1-4 15-12 1z" fill="url(#or)" stroke="#522"/><g fill="#fff" stroke="#222"><path d="M7 3h4v4H7zM17 2h4v4h-4zM4 10h4v4H4zM15 10h4v4h-4zM2 17h4v4H2zM12 17h4v4h-4z"/></g></svg></button>
          <button aria-label="Cap holes"><svg viewBox="0 0 24 24"><path d="M5 13l7-3 8 3v6l-7 3-8-3z" fill="#bbb" stroke="#444"/><path d="M5 13l8 3 7-3M13 16v6" fill="none" stroke="#444"/><path d="M6 6l6-3 8 2-5 4z" fill="#f07820" stroke="#844"/></svg></button>
        </div>
        <div class="caption">Util<span>+</span></div>
      </div>
    </div>

    <div class="gh-bar">
      <button aria-label="Open file"><svg width="24" height="24" viewBox="0 0 24 24"><path d="M4 10l6-7h8l1 8H4z" fill="#fff" stroke="#444"/><path d="M10 3v5H6" fill="none" stroke="#444"/><path d="M3 22V12h8l2-2h8l-1 12z" fill="#58c040" stroke="#285c18"/><path d="M3 16h17" stroke="#a4ec84"/></svg></button>
      <button aria-label="Save file"><svg width="24" height="24" viewBox="0 0 24 24"><path d="M2 2h20v20H5l-3-3z" fill="#2c6ee0" stroke="#0d2c70"/><path d="M6 2h12v10H6z" fill="#f4f4f4"/><path d="M8 5h8M8 8h8" stroke="#bbb"/><path d="M7 15h10v7H7z" fill="#d8d8d8"/><path d="M9 16h3v5H9z" fill="#2c5ebc"/></svg></button>
      <i class="sep"></i>
      <select aria-label="Zoom"><option>100%</option></select>
      <button aria-label="Zoom extents"><svg width="20" height="20" viewBox="0 0 20 20"><path d="M2 7V2h5M13 2h5v5M18 13v5h-5M7 18H2v-5" fill="none" stroke="#111" stroke-width="3"/><path d="M8 8l4 4M12 8l-4 4" stroke="#111" stroke-width="1.500"/></svg></button>
      <i class="drop"></i>
      <button aria-label="Preview"><svg width="22" height="20" viewBox="0 0 22 20"><path d="M1 10q10-13 20 0-10 12-20 0z" fill="#fff" stroke="#112"/><circle cx="11" cy="10" r="5" fill="#3aa0e0" stroke="#124"/><circle cx="11" cy="10" r="2.200" fill="#012"/><path d="M1 9q10-13 20 0" fill="none" stroke="#111" stroke-width="1.800"/></svg></button>
      <i class="drop"></i>
      <button aria-label="Sketch"><svg width="22" height="22" viewBox="0 0 22 22"><path d="M1 15q5-3 3 1t7 3l4-4" fill="none" stroke="#511" stroke-width="2"/><path d="M9 13l9-11 3 4-5 9-6 3z" fill="#d83028" stroke="#611" stroke-width=".6"/><path d="M9 13l5 3-5 3z" fill="#f8d090"/></svg></button>
      <span class="grow"></span>
      <button aria-label="No preview"><svg width="24" height="24" viewBox="0 0 24 24"><path d="M5 12l4-9h7l4 7-2 5z" fill="#ddd" stroke="#888"/><ellipse cx="14" cy="6" rx="3" ry="2" fill="#fff" stroke="#888"/><path d="M3 16q9-6 18 0-9 10-18 0z" fill="#222"/></svg></button>
      <button aria-label="Wireframe preview"><svg width="24" height="24" viewBox="0 0 24 24"><path d="M2 15L14 2l8 7-11 13z" fill="#fff"/><ellipse cx="7" cy="17" rx="4" ry="6" transform="rotate(-40 7 17)" fill="none" stroke="#444"/><ellipse cx="16" cy="8" rx="4" ry="6" transform="rotate(-40 16 8)" fill="none" stroke="#444"/><path d="M3 12l9-9M11 22l10-9" stroke="#444"/></svg></button>
      <button class="on" aria-label="Shaded preview"><svg width="24" height="24" viewBox="0 0 24 24"><path d="M2 14q0-2 10-11 5-1 9 3 2 3 1 6L12 22q-8-1-10-8z" fill="#c01414" stroke="#400"/><ellipse cx="16" cy="8" rx="3" ry="4" transform="rotate(-40 16 8)" fill="#5c0808"/><path d="M4 14l9-9" stroke="#e55" stroke-width="2"/></svg></button>
      <i class="sep"></i>
      <button aria-label="Selected preview"><svg width="24" height="24" viewBox="0 0 24 24"><path d="M2 14q1 7 8 8l6-4-10-9z" fill="#ddd" stroke="#555"/><path d="M7 8l6-6q9 2 9 9l-5 6z" fill="#48ac28" stroke="#143"/><ellipse cx="16" cy="8" rx="3" ry="4" transform="rotate(-40 16 8)" fill="#2c7414" stroke="#143"/><path d="M1 4l20 17" stroke="#222"/></svg></button>
      <button aria-label="Preview quality"><svg width="24" height="24" viewBox="0 0 24 24"><circle cx="12" cy="12" r="9" fill="#e4e4e4" stroke="#444"/><path d="M12 3a9 9 0 000 18z" fill="url(#or)" stroke="#633"/></svg></button>
      <i class="sep"></i>
      <button aria-label="Mesh settings"><svg width="24" height="24" viewBox="0 0 24 24"><path d="M7 3l10-1 6 10-6 9H8L1 12z" fill="#a9d4fa" stroke="#124" stroke-width="1.500"/></svg></button>
    </div>

    <div class="canvas">
      <svg class="wires">
        <defs><pattern id="grid" x="897" y="211" width="149" height="49.500" patternUnits="userSpaceOnUse"><path d="M0 .5h149M.5 0v50" stroke="#bab6ae" fill="none"/></pattern></defs>
        <g transform="translate(-729 -195)">
          <rect x="749" y="195" width="4000" height="4000" fill="url(#grid)"/>
          <g fill="none" stroke="#57534c" stroke-width="2.500">
            <path d="M1050 191c16 10 34 15 52 15M997 231c40 0 60-5 105-5M1000 286c50 0 50-41 102-41M905 471c50 0 60 12 110 12M895 514c50 0 60-11 120-11"/>
          </g>
        </g>
      </svg>

      <div class="node param crv1">Crv</div>
      <div class="node param crv2">Crv</div>
      <div class="node param light crv3">Crv</div>
      <div class="node param light crv4">Crv</div>
      <div class="node note">Revolve</div>
      <div class="node comp swp">
        <ul><li>R¹</li><li>R²</li><li>S</li><li>H</li></ul><b><span>Swp2</span></b><em>S</em>
      </div>
      <div class="node comp light rev">
        <ul><li>P</li><li>A</li><li>D</li></ul><b><span>RevSrf</span></b><em>S</em>
      </div>

      <svg class="compass" width="28" height="56" viewBox="1252 630 28 56">
        <path d="M1257 657q4-13 16-16h8" fill="none" stroke="#111" stroke-width="4"/>
        <circle cx="1276" cy="663" r="19" fill="#ececec" stroke="#777" stroke-width="1.500"/>
        <circle cx="1276" cy="663" r="17" fill="none" stroke="#fff" stroke-width="2"/>
        <path d="M1272 632l4 5-3 6-5-4z" fill="#111"/><path d="M1271 646l4 0-2 5zM1259 663l5 3-5 2zM1278 678l2 4-2 0z" fill="#fff" stroke="#aaa" stroke-width=".5"/>
      </svg>

      <div class="recent">
        <button aria-label="Polyline"><svg viewBox="0 0 24 24"><path d="M4 20l6-5 2-7 8-4" fill="none" stroke="#822" stroke-width="1.500"/><g fill="#fff" stroke="#222"><circle cx="4" cy="20" r="1.600"/><circle cx="10" cy="15" r="1.600"/><circle cx="12" cy="8" r="1.600"/><circle cx="20" cy="4" r="1.600"/></g></svg></button>
        <button aria-label="Vector"><svg viewBox="0 0 24 24"><path d="M5 15l6-5-2-3 9-1-2 9-2-3-6 6z" fill="#f0a818" stroke="#633"/><circle cx="4" cy="20" r="2" fill="#fff" stroke="#333"/><circle cx="20" cy="3" r="2" fill="#fff" stroke="#333"/></svg></button>
        <button aria-label="Null"><svg viewBox="0 0 24 24"><path d="M6 2h12l5 10-5 10H6L1 12z" fill="#2b2b2b" stroke="#000"/><path d="M8 8l8 8M16 8l-8 8" stroke="#fff" stroke-width="3"/></svg></button>
        <button aria-label="Loft"><svg viewBox="0 0 24 24"><path d="M4 3q5 4 1 9t1 9h14q-5-4-1-9t-1-9z" fill="url(#or)"/><path d="M3 2q5 4 2 9t1 11M10 2q5 4 2 9t1 11M18 2q5 4 2 9t1 11" fill="none" stroke="#111" stroke-width="2"/></svg></button>
        <button aria-label="Pipe"><svg viewBox="0 0 24 24"><path d="M6 2h12l5 10-5 10H6L1 12z" fill="#2b2b2b" stroke="#000"/><ellipse cx="12" cy="12" rx="8" ry="5" transform="rotate(-40 12 12)" fill="#777" stroke="#ddd" stroke-width="1.500"/><ellipse cx="13" cy="11" rx="4" ry="2" transform="rotate(-40 13 11)" fill="#333" stroke="#ccc"/></svg></button>
      </div>
    </div>

    <footer class="gh-status">
      <svg width="16" height="16" viewBox="0 0 16 16"><circle cx="8" cy="8" r="7.500" fill="url(#bl)" stroke="#0a2a60"/><rect x="6" y="3" width="4" height="7" rx="2" fill="none" stroke="#fff"/><circle cx="8" cy="12.500" r="1" fill="#fff"/></svg>
      <span>Autosave complete (6 seconds ago)</span>
      <span class="version">0.9.007</span>
    </footer>
  </section>

</body>
</html>
```
FILE: styles.css
```
* {
  box-sizing: border-box;
}

body {
  margin: 0;
  height: 100vh;
  display: flex;
  overflow: hidden;
  background: #e0e4ec;
  font-family: 'Open Sans', 'Noto Sans', sans-serif;
  font-size: 11px;
  color: #222;
}

button {
  border: none;
  background: none;
  padding: 0;
  margin: 0;
  font: inherit;
  color: inherit;
  white-space: nowrap;
}

svg {
  display: block;
}

.defs {
  position: absolute;
}

/* ---------- Rhino window ---------- */
.rhino {
  flex: 0 0 56.8%;
  min-width: 0;
  display: flex;
  flex-direction: column;
  overflow: hidden;
  background: #e0e4ec;
}

.rhino-title {
  height: 23px;
  line-height: 23px;
  background: linear-gradient(#b8b8b8, #fff 5px);
  font-family: 'Noto Sans', sans-serif;
  white-space: nowrap;
}

.rhino-menu {
  height: 18px;
  display: flex;
  align-items: center;
  justify-content: space-between;
  padding: 0 72px 0 2px;
  background: #fff;
}

.history {
  height: 32px;
  padding: 2px 0 0 2px;
  line-height: 16px;
  background: #fff;
  border-top: 2px solid #dfe2ea;
  border-bottom: 1px solid #999;
  font-family: 'Liberation Sans', sans-serif;
  font-size: 12px;
}

.command {
  display: flex;
  height: 19px;
  background: #fff;
  font: bold 11px/18px 'Liberation Sans', sans-serif;
}

.command input {
  flex: 1;
  border: none;
  outline: none;
}

.tool-tabs {
  height: 23px;
  margin-right: -11px;
  padding-top: 7px;
  display: flex;
  background: #dfe2ea;
  border-bottom: 1px solid #bcc3d2;
  font-family: 'Liberation Sans', sans-serif;
  font-size: 11px;
}

.tool-tabs button {
  position: relative;
  flex: 1 0 auto;
  z-index: 1;
  padding: 0 8px;
  height: 16px;
  line-height: 16px;
}

.tool-tabs button::before {
  content: "";
  position: absolute;
  z-index: -1;
  inset: 0 -1px 0 0;
  background: #d6dcec;
  border: 1px solid #a9b1c6;
  border-bottom: none;
  border-radius: 3px 3px 0 0;
  transform: skewX(-20deg);
}

.tool-tabs .active {
  flex-grow: 0;
  padding: 0 4px 0 0;
}

.tool-tabs .active::before {
  background: #f6f8fc;
  transform: none;
}

.toolbar {
  height: 37px;
  flex: none;
  margin-right: -21px;
  margin-left: -2px;
  padding-top: 1px;
  display: grid;
  grid-template-columns: repeat(27, 1fr);
  align-items: start;
  background: linear-gradient(#fcfdfe, #dfe3eb 32px, #c6cad4 33px, #dfe2ea 34px);
}

.toolbar.last {
  border-bottom: 1px solid #cdd1da;
}

.toolbar svg {
  width: 100%;
  height: 28px;
}

.more {
  position: relative;
}

.more::after {
  content: "";
  position: absolute;
  right: 1px;
  bottom: 1px;
  border: 3px solid;
  border-color: transparent #666 #666 transparent;
}

.pressed {
  background: #d4d7dd;
}

.ico-text {
  font: bold 14px 'Liberation Sans', sans-serif;
  text-anchor: middle;
  fill: #111;
}

.ico-text.small {
  font-size: 11px;
}

.ico-text.big {
  font-size: 17px;
}

.sun-text {
  font: 7px 'Liberation Sans', sans-serif;
  text-anchor: middle;
}

.work {
  flex: 1;
  min-height: 0;
  display: flex;
}

.side {
  flex: 0 0 27px;
  display: flex;
  flex-direction: column;
  padding-top: 7px;
  background: #e0e4ec;
}

.side button {
  flex: 1;
  width: 20px;
}

.side svg {
  width: 20px;
  height: 28px;
}

.chevrons {
  font-size: 16px;
  line-height: 20px;
  text-align: right;
}

.viewport {
  position: relative;
  flex: 1;
  min-width: 0;
  background: #9b9fa8;
}

.scene {
  width: 100%;
  height: 100%;
}

.scene text {
  font: 12px 'Open Sans', sans-serif;
  fill: #585c62;
}

.view-name {
  position: absolute;
  left: 1px;
  top: 2px;
  height: 17px;
  padding: 0 18px 0 8px;
  background: #8ba6c6;
  line-height: 17px;
}

.view-name::before {
  content: "";
  position: absolute;
  right: 10px;
  top: 2px;
  height: 13px;
  border-left: 1px solid #111;
}

.view-name::after {
  content: "";
  position: absolute;
  right: 1px;
  top: 7px;
  border: 4px solid transparent;
  border-top-color: #111;
}

.view-tabs {
  height: 21px;
  margin-left: 27px;
  display: flex;
  gap: 1px;
}

.view-tabs button {
  height: 21px;
  padding: 0 7px 0 10px;
  background: #d3d9e8;
  border-right: 1px solid #adb3c4;
  border-bottom: 1px solid #adb3c4;
  border-radius: 0 0 3px 8px;
}

.view-tabs .active {
  background: #fff;
}

.view-tabs .add {
  background: none;
  padding: 0 8px 0 11px;
}

.osnap {
  height: 29px;
  padding-top: 4px;
  display: flex;
  align-items: center;
  gap: 8px;
  font: 10px 'Liberation Sans', sans-serif;
}

.osnap span {
  width: 10px;
}

.osnap label {
  display: flex;
  align-items: center;
  gap: 5px;
}

.osnap input {
  appearance: none;
  width: 13px;
  height: 13px;
  margin: 0;
  border: 1px solid #444;
  background: #fff;
  position: relative;
}

.osnap input:checked::after {
  content: "";
  position: absolute;
  left: 2px;
  top: 2px;
  width: 7px;
  height: 4px;
  border: solid #222;
  border-width: 0 0 1px 1px;
  transform: rotate(-45deg);
}

.osnap input:disabled {
  border-color: #bbb;
  background: #e2e2e2;
}

.rhino-status {
  height: 20px;
  flex: none;
  display: flex;
  border-top: 1px solid #a9b0c4;
  font: 12px/19px 'Liberation Sans', sans-serif;
  color: #111;
}

.rhino-status > * {
  flex: none;
  border-right: 1px solid #a9b0c4;
  text-align: center;
}

.plane {
  width: 20px;
  padding-right: 8px;
}

.coord {
  width: 87px;
}

.layer {
  width: 160px;
  display: flex;
  align-items: center;
  gap: 2px;
  padding-left: 3px;
}

.swatch {
  width: 14px;
  height: 14px;
  background: #000;
}

.snap {
  width: 70px;
}

.ortho {
  width: 48px;
}

.planar {
  width: 53px;
  font-weight: bold;
  background: #e8f4fc;
}

.rhino-status button:last-child {
  padding-left: 8px;
  border: none;
}

/* ---------- Grasshopper window ---------- */
.gh {
  flex: 1;
  min-width: 0;
  display: flex;
  flex-direction: column;
  overflow: hidden;
  background: #f0f0f0;
  border-left: 2px solid #777;
  border-top: 1px solid #888;
  font-size: 10px;
}

.gh-title {
  height: 29px;
  flex: none;
  display: flex;
  align-items: center;
  gap: 32px;
  padding: 0 35px 0 6px;
  background: #fff;
  font-size: 11px;
  color: #888;
}

.gh-title span {
  flex: 1;
}

.gh-menu {
  height: 24px;
  flex: none;
  display: flex;
  align-items: center;
  gap: 19px;
  padding-left: 13px;
  background: #f5f5f5;
}

.doc {
  margin-left: auto;
}

.gh-tabs {
  height: 23px;
  flex: none;
  margin: 0 -2px;
  display: grid;
  grid-template-columns: repeat(20, 1fr);
  border-bottom: 1px solid #a8a8a8;
  color: #777;
}

.gh-tabs .active {
  margin-bottom: -1px;
  background: #fcfcfc;
  border: 1px solid #999;
  border-bottom: none;
  border-radius: 6px 6px 0 0;
  color: #333;
}

.ribbon {
  flex: none;
  height: 87px;
  display: flex;
  align-items: flex-start;
  gap: 3px;
  padding: 2px 1px;
  background: linear-gradient(#d8d8d8, #f0f0f0);
  border-bottom: 1px solid #777;
}

.panel {
  width: 71px;
  border: 1px solid #777;
  border-radius: 4px;
  overflow: hidden;
  background: linear-gradient(#d2d2d2, #ececec);
}

.analysis {
  width: 184px;
}

.freeform {
  width: 108px;
}

.icons {
  height: 57px;
  margin: 0 -2px 0 -4px;
  padding-top: 2px;
  display: grid;
  grid-template-columns: repeat(2, 1fr);
  grid-template-rows: 27px 27px;
}

.analysis .icons {
  grid-template-columns: repeat(5, 1fr);
}

.freeform .icons {
  grid-template-columns: repeat(3, 1fr);
}

.icons button {
  display: flex;
  align-items: center;
  justify-content: center;
  border-left: 1px solid #bcbcbc;
}

.icons svg {
  width: 22px;
  height: 22px;
}

.m {
  font: italic bold 18px/20px 'Liberation Serif', serif;
  color: #111;
}

.m sup {
  font-size: 12px;
  line-height: 0;
}

.caption {
  position: relative;
  height: 14px;
  padding-right: 12px;
  line-height: 11px;
  text-align: center;
  background: #222;
  color: #ddd;
}

.caption span {
  position: absolute;
  right: 3px;
  top: 2px;
  color: #aaa;
}

.gh-bar {
  flex: none;
  height: 31px;
  display: flex;
  align-items: center;
  gap: 5px;
  padding-left: 4px;
  margin-right: -12px;
  background: linear-gradient(#fff, #f6f6f6);
}

.gh-bar > * {
  flex: none;
}

.gh-bar .grow {
  flex: 1;
}

.gh-bar .on {
  padding: 1px;
  border: 1px solid #1778b8;
  background: #d8ecf8;
}

.sep {
  width: 1px;
  height: 20px;
  background: #ccc;
}

.drop {
  margin: 3px 1px 0 2px;
  border: 3px solid transparent;
  border-top-color: #111;
}

.gh-bar select {
  appearance: none;
  width: 70px;
  height: 26px;
  padding: 0 4px;
  border: 1px solid #666;
  border-radius: 0;
  color: #222;
  font: 12px 'Open Sans', sans-serif;
  background:
    linear-gradient(45deg, transparent 50%, #555 50%, #555 60%, transparent 60%) 57px 9px / 6px 6px no-repeat,
    linear-gradient(-45deg, transparent 50%, #555 50%, #555 60%, transparent 60%) 62px 9px / 6px 6px no-repeat,
    #fff;
  background:
    linear-gradient(45deg, transparent 45%, #555 45%, #555 60%, transparent 60%) 55px 9px / 6px 6px no-repeat,
    linear-gradient(-45deg, transparent 45%, #555 45%, #555 60%, transparent 60%) 60px 9px / 6px 6px no-repeat,
    #fff;
}

.canvas {
  position: relative;
  flex: 1;
  min-height: 0;
  overflow: hidden;
  background: linear-gradient(90deg, #a7a9a0, #74766f 19px, #333 19px, #333 20px, #d3cec6 20px);
}

.wires {
  position: absolute;
  width: 100%;
  height: 100%;
}

/* nodes sit on the free canvas */
.node {
  position: absolute;
  border: 1px solid #222;
  border-radius: 3px;
  background: linear-gradient(#dcdce4, #b4b4c2 45%, #9c9cac);
  color: #222;
}

.node.light {
  background: linear-gradient(#fafafa, #dedede 50%, #c8c8c8);
}

.param,
.note {
  text-align: center;
}

.param {
  width: 51px;
  height: 21px;
  line-height: 17px;
}

.param::before,
.param::after,
.note::before,
.note::after,
.comp em::after,
.comp li::before {
  content: "";
  position: absolute;
  width: 4px;
  height: 10px;
  top: calc(50% - 5px);
  border: 2px solid #111;
  background: #fff;
}

.param::before,
.note::before,
.comp li::before {
  left: -5px;
  border-right: none;
  border-radius: 5px 0 0 5px;
}

.param::after,
.note::after,
.comp em::after {
  right: -5px;
  border-left: none;
  border-radius: 0 5px 5px 0;
}

.crv1 { left: 213px; top: 25px; }
.crv2 { left: 216px; top: 81px; }
.crv3 { left: 122px; top: 266px; }
.crv4 { left: 112px; top: 308px; }

.note {
  left: 228px;
  top: 156px;
  width: 160px;
  height: 41px;
  padding-right: 9px;
  background: #fdf855;
  font: 11px/39px 'Liberation Mono', monospace;
}

.comp {
  display: flex;
  padding: 1px;
}

.comp ul {
  flex: none;
  width: 20px;
  margin: 0;
  padding: 0;
  list-style: none;
  text-align: right;
}

.comp li {
  position: relative;
  height: 20px;
  padding-right: 5px;
  line-height: 18px;
}

.comp li::before {
  left: -6px;
}

.comp b {
  flex: none;
  width: 25px;
  display: flex;
  align-items: center;
  justify-content: center;
  border: 1px solid #111;
  border-radius: 4px;
  background: linear-gradient(#777, #3a3a3a 10px, #333);
  color: #fff;
  font-size: 12px;
}

.comp b span {
  writing-mode: vertical-rl;
  transform: rotate(180deg);
}

.comp em {
  flex: 1;
  align-self: center;
  padding: 0 0 2px 4px;
  font-style: normal;
}

.swp {
  left: 376px;
  top: -1px;
  width: 68px;
  height: 84px;
}

.rev {
  left: 287px;
  top: 276px;
  width: 66px;
  height: 64px;
}

.compass {
  position: absolute;
  right: 0;
  bottom: 9px;
}

.recent {
  position: absolute;
  left: 0;
  bottom: 0;
  display: flex;
  gap: 4px;
  padding: 1px 6px 1px 2px;
  border: 1px solid #444;
  border-left: none;
  background: linear-gradient(#eee, #888);
}

.recent svg {
  width: 24px;
  height: 24px;
}

.gh-status {
  flex: none;
  height: 25px;
  display: flex;
  align-items: center;
  gap: 3px;
  padding-left: 1px;
  background: #f8f8f8;
}

.version {
  margin-left: auto;
  color: #666;
}
```
